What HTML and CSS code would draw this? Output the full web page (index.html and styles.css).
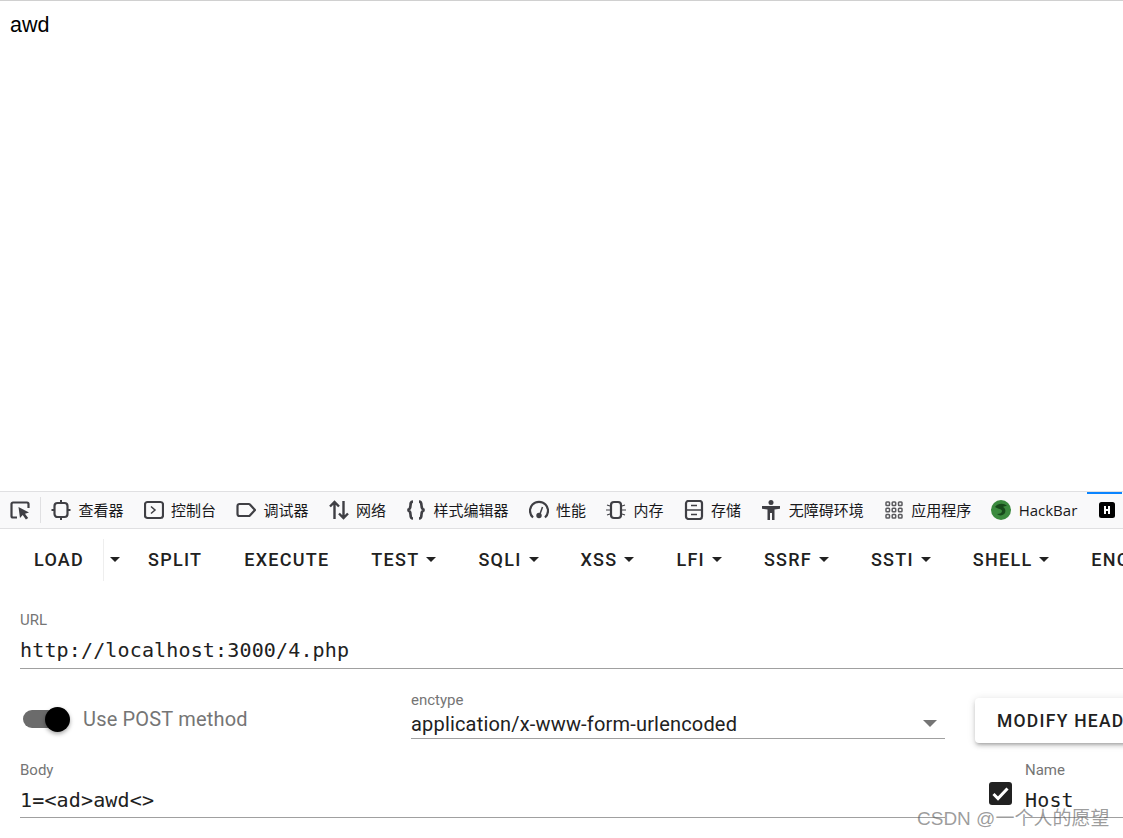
FILE: index.html
```html
<!DOCTYPE html>
<html lang="zh">
<head>
<meta charset="utf-8">
<title>awd</title>
<link rel="stylesheet" href="styles.css">
</head>
<body>
<main class="page"><p class="output">awd</p></main>
<nav class="devtools">
  <button class="pick" aria-label="pick">
    <svg class="icon" viewBox="0 0 20 20"><path d="M7 17.500H3A1.500 1.500 0 0 1 1.500 16V4A1.500 1.500 0 0 1 3 2.500h14A1.500 1.500 0 0 1 18.500 4V8" fill="none" stroke="#3f3f44" stroke-width="2.200"/><path d="M8.500 7l10.500 5.500-4 1.200 3.200 4.300-2.300 1.600-3.200-4.500-2.700 3z" fill="#3f3f44"/></svg>
  </button>
  <div class="tab"><svg class="icon" viewBox="0 0 20 20"><rect x="3.500" y="3" width="13" height="14" rx="3" fill="none" stroke="#3f3f44" stroke-width="2.200"/><path d="M.5 10h3M16.500 10h3M10 0v3M10 17v3" stroke="#3f3f44" stroke-width="2"/></svg><span>查看器</span></div>
  <div class="tab"><svg class="icon" viewBox="0 0 20 20"><rect x="1" y="2" width="18" height="16" rx="2.500" fill="none" stroke="#3f3f44" stroke-width="2.200"/><path d="M7 6.500l4 3.500-4 3.500" fill="none" stroke="#3f3f44" stroke-width="1.500"/></svg><span>控制台</span></div>
  <div class="tab"><svg class="icon" viewBox="0 0 20 20"><path d="M3.500 4h9.300a1.500 1.500 0 0 1 1.100.500L19 10l-5.100 5.500a1.500 1.500 0 0 1-1.100.500H3.500A2 2 0 0 1 1.500 14V6a2 2 0 0 1 2-2z" fill="none" stroke="#3f3f44" stroke-width="2.200"/></svg><span>调试器</span></div>
  <div class="tab"><svg class="icon" viewBox="0 0 20 20"><path d="M5.500 19V2M1 6.500L5.500 2 10 6.500M14.500 1v17M10 13.500L14.500 18l4.500-4.500" fill="none" stroke="#3f3f44" stroke-width="2.400"/></svg><span>网络</span></div>
  <div class="tab"><svg class="icon" viewBox="0 0 20 20"><path d="M7 1.500C4.500 1.500 4.500 3.500 4.500 5.500 4.500 8 4 9.500 1.500 10 4 10.500 4.500 12 4.500 14.500 4.500 16.500 4.500 18.500 7 18.500M13 1.500c2.500 0 2.500 2 2.500 4 0 2.500.5 4 3 4.500-2.500.5-3 2-3 4.500 0 2 0 4-2.500 4" fill="none" stroke="#3f3f44" stroke-width="2.600"/></svg><span>样式编辑器</span></div>
  <div class="tab"><svg class="icon" viewBox="0 0 20 20"><path d="M4 17.500A9 9 0 1 1 16 17.500" fill="none" stroke="#3f3f44" stroke-width="2.200"/><path d="M13.500 7L11 14" stroke="#3f3f44" stroke-width="1.500"/><circle cx="10" cy="15.500" r="2.700" fill="#3f3f44"/></svg><span>性能</span></div>
  <div class="tab"><svg class="icon" viewBox="0 0 20 20"><rect x="5" y="2" width="10" height="16" rx="3" fill="none" stroke="#3f3f44" stroke-width="2.200"/><path d="M1 5l3 1M0 10h4M1 15l3-1M19 5l-3 1M20 10h-4M19 15l-3-1" stroke="#3f3f44" stroke-width="1.200"/></svg><span>内存</span></div>
  <div class="tab"><svg class="icon" viewBox="0 0 20 20"><rect x="2" y="1" width="16" height="18" rx="2.500" fill="none" stroke="#3f3f44" stroke-width="2.200"/><path d="M2 10h16M7 5.500h6M7 14.500h6" stroke="#3f3f44" stroke-width="1.500"/></svg><span>存储</span></div>
  <div class="tab"><svg class="icon" viewBox="0 0 20 20"><circle cx="10" cy="2.500" r="2.500" fill="#3f3f44"/><path d="M1 6h18v2.800l-5.500.8V20H11v-7H9v7H6.500V9.600L1 8.800z" fill="#3f3f44"/></svg><span>无障碍环境</span></div>
  <div class="tab"><svg class="icon" viewBox="0 0 20 20"><g fill="none" stroke="#5b5b5f" stroke-width="1.500"><rect x="2" y="2" width="3.500" height="3.500" rx=".8"/><rect x="8.200" y="2" width="3.500" height="3.500" rx=".8"/><rect x="14.500" y="2" width="3.500" height="3.500" rx=".8"/><rect x="2" y="8.200" width="3.500" height="3.500" rx=".8"/><rect x="8.200" y="8.200" width="3.500" height="3.500" rx=".8"/><rect x="14.500" y="8.200" width="3.500" height="3.500" rx=".8"/><rect x="2" y="14.500" width="3.500" height="3.500" rx=".8"/><rect x="8.200" y="14.500" width="3.500" height="3.500" rx=".8"/><rect x="14.500" y="14.500" width="3.500" height="3.500" rx=".8"/></g></svg><span>应用程序</span></div>
  <div class="tab"><svg class="icon" viewBox="0 0 20 20"><circle cx="10" cy="10" r="10" fill="#3b8a3e"/><path d="M4 7c3-4 9-4 12-1-2 0-3 0-4 1 2 1 3 3 2 6-2 3-6 3-8 1 3 0 5-1 5-3 0-2-4-2-7-4z" fill="#174a1b"/></svg><span class="latin">HackBar</span></div>
  <div class="tab active"><svg class="badge" viewBox="0 0 16 16"><rect width="16" height="16" rx="2.500" fill="#000"/><path d="M5 4h2v3h2V4h2v8H9V9H7v3H5z" fill="#fff"/></svg></div>
</nav>
<section class="hackbar">
  <div class="toolbar">
    <button class="btn load">LOAD</button>
    <button class="split-caret" aria-label="more"><i class="caret"></i></button>
    <button class="btn">SPLIT</button>
    <button class="btn">EXECUTE</button>
    <button class="btn">TEST<i class="caret"></i></button>
    <button class="btn">SQLI<i class="caret"></i></button>
    <button class="btn">XSS<i class="caret"></i></button>
    <button class="btn">LFI<i class="caret"></i></button>
    <button class="btn">SSRF<i class="caret"></i></button>
    <button class="btn">SSTI<i class="caret"></i></button>
    <button class="btn">SHELL<i class="caret"></i></button>
    <button class="btn">ENCODING<i class="caret"></i></button>
  </div>
  <div class="field url">
    <label class="label">URL</label>
    <div class="value mono">http://localhost:3000/4.php</div>
  </div>
  <div class="options">
    <div class="switch"><span class="track"></span><span class="thumb"></span><span class="switch-label">Use POST method</span></div>
    <div class="field select">
      <label class="label">enctype</label>
      <div class="value sans">application/x-www-form-urlencoded<i class="select-caret"></i></div>
    </div>
    <button class="modify">MODIFY HEADERS</button>
  </div>
  <div class="lower">
    <div class="field body-field">
      <label class="label">Body</label>
      <div class="value mono">1=&lt;ad&gt;awd&lt;&gt;</div>
    </div>
    <div class="check"><svg viewBox="0 0 23 23"><rect x="0" y="0" width="23" height="23" rx="3" fill="#212121"/><path d="M4.500 12l4.500 4.500L18.500 6.500" fill="none" stroke="#fff" stroke-width="3"/></svg></div>
    <div class="field name-field">
      <label class="label">Name</label>
      <div class="value mono">Host</div>
    </div>
  </div>
</section>
<div class="watermark">CSDN @一个人的愿望</div>
</body>
</html>
```
FILE: styles.css
```css
* { box-sizing: border-box; }
html, body { margin: 0; height: 838px; overflow: hidden; background: #fff; }
body { width: 1123px; display: flex; flex-direction: column; font-family: Roboto, "Noto Sans CJK SC", sans-serif; color: #212121; }
button { font: inherit; background: none; border: 0; padding: 0; color: inherit; }

.page { height: 491px; border-top: 1px solid #d0d0d0; padding: 12px 10px 0; flex: none; }
.output { margin: 0; font: 21.500px/24px "Liberation Sans", sans-serif; color: #000; }

.devtools { height: 38px; flex: none; display: flex; align-items: center; background: #f9f9fa; border-top: 1px solid #e0e0e2; border-bottom: 1px solid #e0e0e2; padding-left: 10px; overflow: hidden; white-space: nowrap; }
.pick { width: 31px; height: 26px; padding-right: 10px; border-right: 1px solid #e0e0e2; display: flex; align-items: center; flex: none; }
.icon { width: 20px; height: 20px; flex: none; }
.tab { display: flex; align-items: center; gap: 7.500px; padding: 0 10px; height: 100%; font: 15px "Noto Sans CJK SC", sans-serif; color: #18181a; flex: none; }
.tab span { margin-top: -2px; }
.tab .latin { font: 15px "Open Sans", sans-serif; margin-top: 0; }
.tab.active { padding: 0 0 0 12px; height: 36px; width: 35px; box-shadow: inset 0 2px 0 #0a84ff; }
.badge { width: 16px; height: 16px; }

.hackbar { flex: 1; min-height: 0; overflow: hidden; padding: 0 0 0 20px; }
.toolbar { height: 61px; display: flex; align-items: center; gap: 10px; margin-left: -2px; white-space: nowrap; }
.btn { display: flex; align-items: center; height: 36px; padding: 0 16px; font-size: 18px; font-weight: 500; letter-spacing: 1.25px; flex: none; color: #212121; }
.load { padding-right: 19px; border-right: 1px solid #eee; height: 42px; margin-right: -10px; }
.split-caret { width: 19px; height: 36px; flex: none; display: flex; align-items: center; padding-left: 6px; margin-right: -1px; }
.caret { display: block; width: 0; height: 0; border-left: 5px solid transparent; border-right: 5px solid transparent; border-top: 5px solid #212121; margin-left: 7px; }
.split-caret .caret { margin: 0; }

.field { display: flex; flex-direction: column; }
.label { font-size: 15px; line-height: 16px; color: #757575; }
.value { border-bottom: 1px solid #a0a0a0; height: 40px; display: flex; align-items: center; padding-top: 4px; color: #212121; white-space: nowrap; }
.mono { font: 20px "DejaVu Sans Mono", monospace; letter-spacing: .15px; }
.sans { font: 20px Roboto, sans-serif; letter-spacing: .18px; position: relative; height: 31px; padding-top: 2px; }
.url { margin-top: 22px; }
.url .value { height: 41px; padding-top: 3px; }

.options { display: flex; align-items: flex-start; height: 78px; margin-top: 21px; }
.switch { width: 391px; height: 40px; flex: none; display: flex; align-items: center; position: relative; padding-left: 63px; margin-top: 9px; }
.track { position: absolute; left: 3px; top: 11px; width: 34px; height: 18px; border-radius: 9px; background: #6b6b6b; }
.thumb { position: absolute; left: 25px; top: 7.500px; width: 25px; height: 25px; border-radius: 50%; background: #000; box-shadow: 0 2px 4px rgba(0,0,0,.35); }
.switch-label { font-size: 20px; letter-spacing: .18px; color: #757575; }
.select { width: 534px; flex: none; margin-top: 2px; }
.select-caret { position: absolute; right: 8px; top: 12px; border-left: 7px solid transparent; border-right: 7px solid transparent; border-top: 7px solid #757575; }
.modify { margin: 8px 0 0 30px; height: 45px; width: 200px; flex: none; border-radius: 4px; background: #fff; box-shadow: 0 3px 3px -2px rgba(0,0,0,.2), 0 3px 4px rgba(0,0,0,.14), 0 1px 8px rgba(0,0,0,.12); font-size: 17.500px; font-weight: 500; letter-spacing: 1.25px; text-align: left; padding-left: 22px; white-space: nowrap; overflow: hidden; }

.lower { display: flex; align-items: flex-start; margin-top: -6px; }
.body-field { width: 925px; flex: none; }
.check { width: 23px; height: 23px; margin: 20px 13px 0 44px; flex: none; }
.check svg { display: block; width: 23px; height: 23px; }
.name-field { flex: 1; }

.watermark { position: absolute; left: 917px; top: 803px; font: 19px "Liberation Sans", "Noto Sans CJK SC", sans-serif; color: rgba(90,90,90,.6); white-space: nowrap; }
```
